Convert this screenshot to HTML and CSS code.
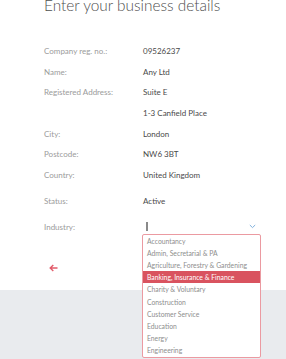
FILE: index.html
```html
<!DOCTYPE html>
<html>
<head>
<meta charset="utf-8">
<link rel="stylesheet" href="styles.css">
</head>
<body>
<div class="page">
  <main class="main">
    <h1 class="title">Enter your business details</h1>
    <div class="details">
      <div class="row"><span class="label">Company reg. no.:</span><span class="value">09526237</span></div>
      <div class="row"><span class="label">Name:</span><span class="value">Any Ltd</span></div>
      <div class="row"><span class="label">Registered Address:</span><span class="value">Suite E</span></div>
      <div class="row"><span class="label"></span><span class="value">1-3 Canfield Place</span></div>
      <div class="row"><span class="label">City:</span><span class="value">London</span></div>
      <div class="row"><span class="label">Postcode:</span><span class="value">NW6 3BT</span></div>
      <div class="row"><span class="label">Country:</span><span class="value">United Kingdom</span></div>
      <div class="row row-tall"><span class="label">Status:</span><span class="value">Active</span></div>
      <div class="row row-tall"><span class="label">Industry:</span>
        <div class="select">
          <span class="caret"></span>
          <svg class="chevron" width="7" height="5" viewBox="0 0 7 5"><path d="M0.8 1 L3.5 3.6 L6.2 1" fill="none" stroke="#7fb0dc" stroke-width="1"/></svg>
          <ul class="options">
            <li>Accountancy</li>
            <li>Admin, Secretarial &amp; PA</li>
            <li>Agriculture, Forestry &amp; Gardening</li>
            <li class="active">Banking, Insurance &amp; Finance</li>
            <li>Charity &amp; Voluntary</li>
            <li>Construction</li>
            <li>Customer Service</li>
            <li>Education</li>
            <li>Energy</li>
            <li>Engineering</li>
          </ul>
        </div>
      </div>
    </div>
    <div class="actions">
      <svg class="back" width="9" height="8" viewBox="0 0 9 8"><path d="M8.5 4 H1.5 M4.3 0.9 L1.2 4 L4.3 7.1" fill="none" stroke="#e25b6a" stroke-width="1.4"/></svg>
    </div>
  </main>
  <footer class="footer"></footer>
</div>
</body>
</html>
```
FILE: styles.css
```css
* { box-sizing: border-box; }
html, body { margin: 0; padding: 0; }
body {
  width: 286px;
  height: 359px;
  overflow: hidden;
  font-family: Lato, "Noto Sans", sans-serif;
  background: #fff;
}
.page {
  display: flex;
  flex-direction: column;
  height: 359px;
}
.main {
  height: 290px;
  padding-left: 44px;
  display: flex;
  flex-direction: column;
}
.title {
  margin: -5px 0 0 0;
  font-size: 15.4px;
  line-height: 20px;
  font-weight: 300;
  color: #4f4f4f;
}
.details {
  margin-top: 25.6px;
  display: flex;
  flex-direction: column;
}
.row {
  display: flex;
  align-items: center;
  height: 20.7px;
  font-size: 8px;
}
.row-tall { margin-top: 5.1px; }
.label {
  width: 99px;
  color: #9b9b9b;
}
.value {
  color: #4a4a4a;
}
.select {
  position: relative;
  width: 119px;
  height: 14px;
  margin-left: -1px;
  display: flex;
  align-items: center;
  justify-content: space-between;
  padding: 0 5px 0 4px;
}
.caret {
  width: 1.5px;
  height: 9px;
  background: #8a8a8a;
}
.chevron { display: block; }
.options {
  position: absolute;
  left: 0;
  top: 14px;
  width: 119px;
  margin: 0;
  padding: 0;
  list-style: none;
  border: 1px solid #eb9aa1;
  border-radius: 2px;
  background: #fff;
  z-index: 2;
}
.options li {
  height: 12.2px;
  line-height: 12.2px;
  padding-left: 4px;
  font-size: 6.8px;
  color: #8e8e8e;
  white-space: nowrap;
}
.options li.active {
  background: #d9535f;
  color: #fff;
}
.actions {
  margin-top: 27px;
  padding-left: 4.5px;
}
.back { display: block; }
.footer {
  flex: 1;
  background: #e9ebee;
}
```
